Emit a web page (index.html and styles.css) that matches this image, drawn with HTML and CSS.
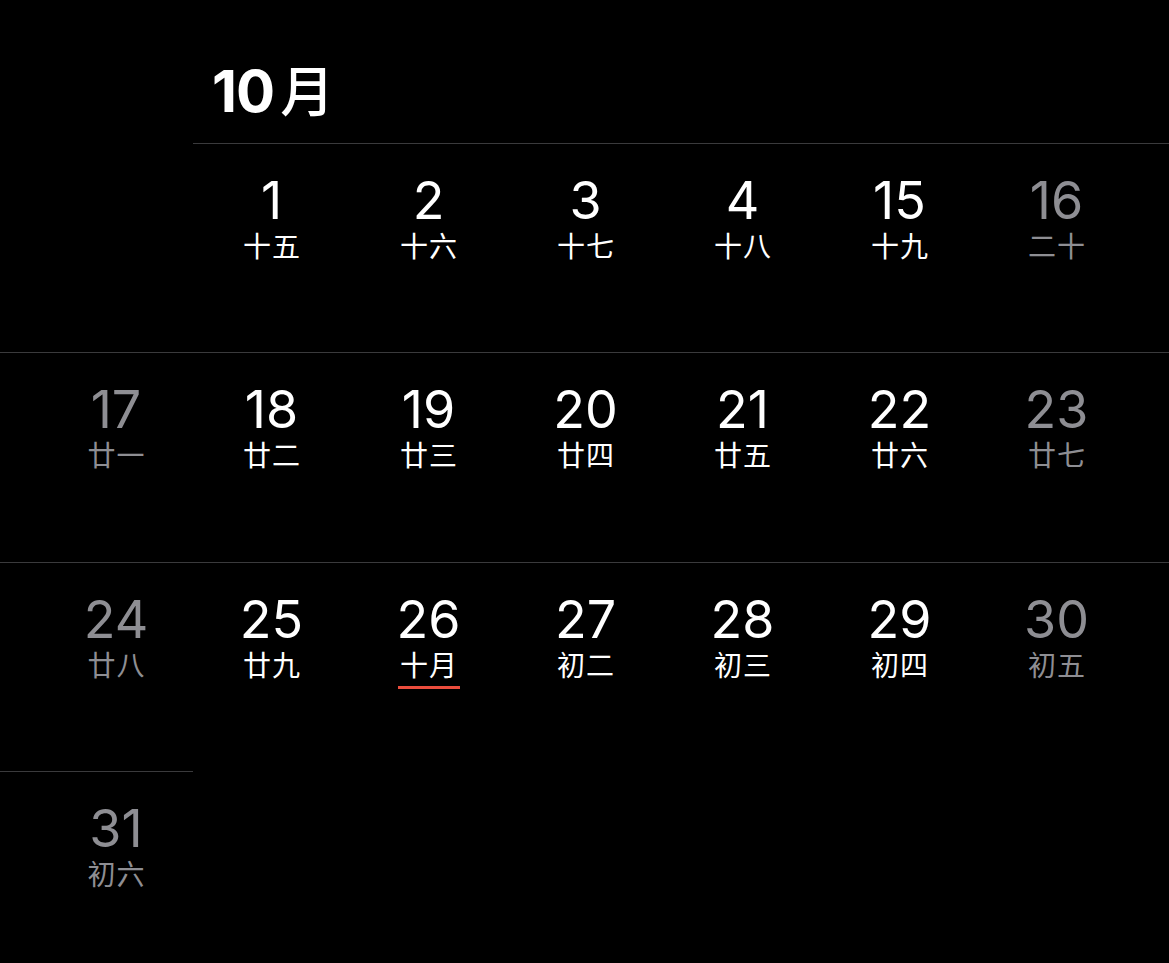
FILE: index.html
```html
<!DOCTYPE html>
<html lang="zh-CN">
<head>
<meta charset="utf-8">
<title>10月</title>
<link rel="stylesheet" href="styles.css">
</head>
<body>
<div class="calendar">
  <div class="month-head"><span class="month-title"><span class="month-num">10</span><span class="month-char">月</span></span></div>

  <div class="week">
    <div class="blank"></div>
    <div class="day"><div class="num">1</div><div class="lunar">十五</div></div>
    <div class="day"><div class="num">2</div><div class="lunar">十六</div></div>
    <div class="day"><div class="num">3</div><div class="lunar">十七</div></div>
    <div class="day"><div class="num">4</div><div class="lunar">十八</div></div>
    <div class="day"><div class="num">15</div><div class="lunar">十九</div></div>
    <div class="day weekend"><div class="num">16</div><div class="lunar">二十</div></div>
    <div class="pad"></div>
  </div>

  <div class="week">
    <div class="day first weekend"><div class="num">17</div><div class="lunar">廿一</div></div>
    <div class="day"><div class="num">18</div><div class="lunar">廿二</div></div>
    <div class="day"><div class="num">19</div><div class="lunar">廿三</div></div>
    <div class="day"><div class="num">20</div><div class="lunar">廿四</div></div>
    <div class="day"><div class="num">21</div><div class="lunar">廿五</div></div>
    <div class="day"><div class="num">22</div><div class="lunar">廿六</div></div>
    <div class="day weekend"><div class="num">23</div><div class="lunar">廿七</div></div>
    <div class="pad"></div>
  </div>

  <div class="week">
    <div class="day first weekend"><div class="num">24</div><div class="lunar">廿八</div></div>
    <div class="day"><div class="num">25</div><div class="lunar">廿九</div></div>
    <div class="day today"><div class="num">26</div><div class="lunar">十月</div><div class="mark"></div></div>
    <div class="day"><div class="num">27</div><div class="lunar">初二</div></div>
    <div class="day"><div class="num">28</div><div class="lunar">初三</div></div>
    <div class="day"><div class="num">29</div><div class="lunar">初四</div></div>
    <div class="day weekend"><div class="num">30</div><div class="lunar">初五</div></div>
    <div class="pad"></div>
  </div>

  <div class="week">
    <div class="day first weekend"><div class="num">31</div><div class="lunar">初六</div></div>
  </div>
</div>
</body>
</html>
```

FILE: styles.css
```css
html, body {
  margin: 0;
  padding: 0;
  background: #000;
}

body {
  width: 1169px;
  height: 963px;
  overflow: hidden;
  color: #fff;
  font-family: Inter, "Noto Sans", "Noto Sans CJK SC", sans-serif;
}

.calendar {
  display: flex;
  flex-direction: column;
}

.month-head {
  height: 143px;
  box-sizing: border-box;
  padding: 60px 0 0 212px;
}

.month-title {
  font-size: 58px;
  line-height: 58px;
  font-family: Inter, "Noto Sans CJK SC", sans-serif;
}

.month-num {
  font-weight: 700;
  margin-right: 6px;
  letter-spacing: -1px;
}

.month-char {
  font-family: "Noto Sans CJK SC", sans-serif;
  font-weight: 500;
  font-size: 54px;
}

.week {
  display: grid;
  grid-template-columns: 193px repeat(6, 157px) 1fr;
  height: 209.33px;
}

.day,
.pad {
  border-top: 1px solid #3a3a3c;
}

.day {
  display: flex;
  flex-direction: column;
  align-items: center;
  padding-top: 31px;
}

.day.first {
  padding-left: 39px;
}

.num {
  font-family: Inter, "Noto Sans", sans-serif;
  font-size: 52px;
  line-height: 52px;
  font-weight: 400;
}

.lunar {
  margin-top: 4px;
  font-family: "Noto Sans CJK SC", sans-serif;
  font-size: 28px;
  line-height: 28px;
  letter-spacing: 1px;
  text-indent: 1px;
}

.weekend {
  color: #8e8e93;
}

.mark {
  width: 62px;
  height: 3px;
  margin-top: 8px;
  background: #eb4d3d;
}
```
